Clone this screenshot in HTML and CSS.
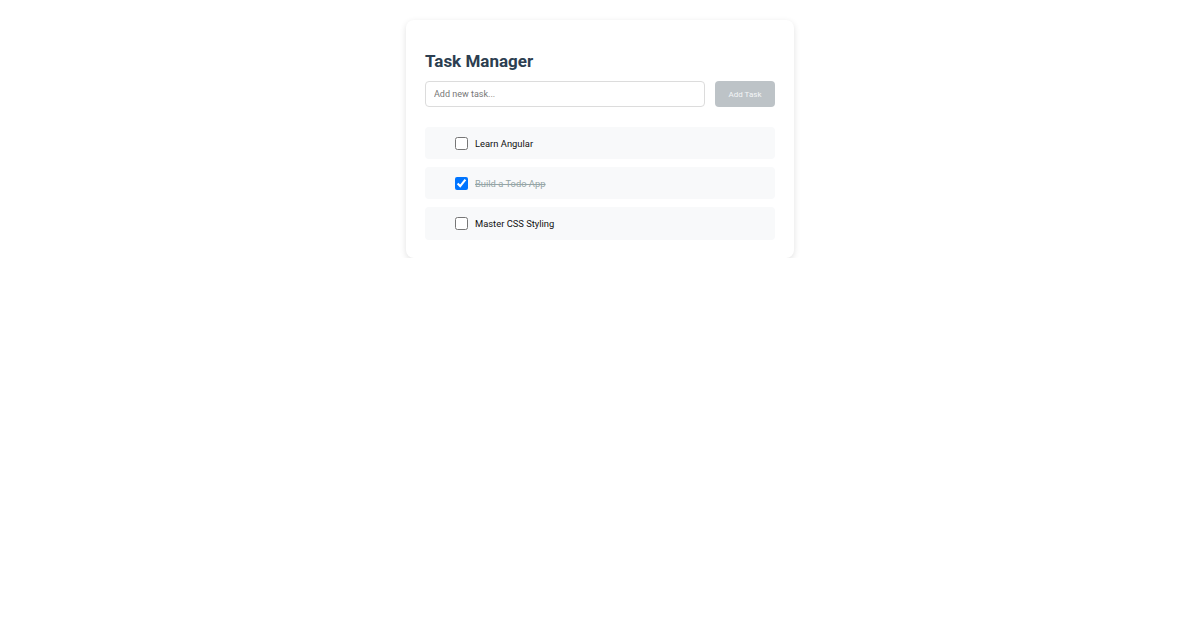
FILE: index.html
```html
<!DOCTYPE html>
<html lang="en">
<head>
<meta charset="utf-8">
<title>Task Manager</title>
<link rel="stylesheet" href="styles.css">
</head>
<body>
<div class="card">
  <h1 class="title">Task Manager</h1>
  <div class="add-row">
    <input class="task-input" type="text" placeholder="Add new task...">
    <button class="add-btn" disabled>Add Task</button>
  </div>
  <ul class="task-list">
    <li class="task"><input class="task-check" type="checkbox"><span class="task-text">Learn Angular</span></li>
    <li class="task done"><input class="task-check" type="checkbox" checked><span class="task-text">Build a Todo App</span></li>
    <li class="task"><input class="task-check" type="checkbox"><span class="task-text">Master CSS Styling</span></li>
  </ul>
</div>
</body>
</html>
```
FILE: styles.css
```css
html, body {
  margin: 0;
  padding: 0;
  background: #ffffff;
  font-family: Roboto, "Liberation Sans", sans-serif;
}
body {
  padding-top: 20px;
}
.card {
  width: 350px;
  margin: 0 auto;
  padding: 19px 19px 18px;
  background: #fff;
  border-radius: 8px;
  box-shadow: 0 2px 6px rgba(0, 0, 0, 0.12);
}
.title {
  margin: 11px 0 8px;
  font-size: 17px;
  line-height: 23px;
  font-weight: 700;
  color: #2c3e50;
}
.add-row {
  display: flex;
  gap: 10px;
  margin-bottom: 20px;
}
.task-input {
  flex: 1;
  height: 26px;
  box-sizing: border-box;
  border: 1px solid #dcdcdc;
  border-radius: 4px;
  padding: 0 8px;
  font-family: Roboto, "Liberation Sans", sans-serif;
  font-size: 9px;
  color: #333;
  outline: none;
}
.task-input::placeholder {
  color: #777;
}
.add-btn {
  width: 60px;
  height: 26px;
  border: none;
  border-radius: 4px;
  background: #bdc3c7;
  color: #f4f6f7;
  font-family: Roboto, "Liberation Sans", sans-serif;
  font-size: 8px;
  padding: 0;
}
.task-list {
  list-style: none;
  margin: 0;
  padding: 0;
  display: flex;
  flex-direction: column;
  gap: 8px;
}
.task {
  display: flex;
  align-items: center;
  height: 32px;
  padding-left: 30px;
  background: #f8f9fa;
  border-radius: 4px;
}
.task:last-child {
  height: 33px;
}
.task-check {
  width: 13px;
  height: 13px;
  margin: 0 7px 0 0;
}
.task-text {
  font-size: 9.4px;
  color: #111;
}
.done .task-text {
  color: #95a5a6;
  text-decoration: line-through;
}
```
